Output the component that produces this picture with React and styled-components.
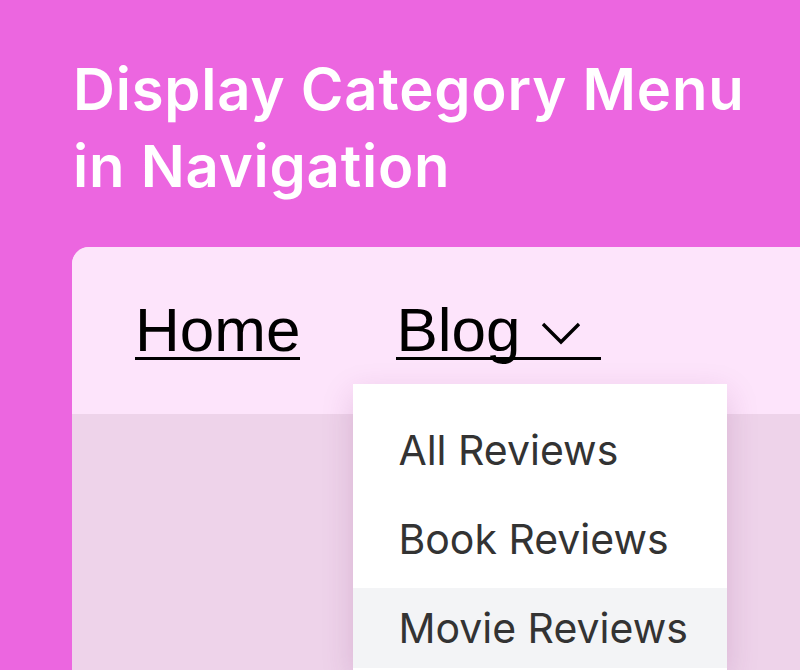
import styled, { createGlobalStyle } from "styled-components";

const GlobalStyle = createGlobalStyle`
  html, body {
    margin: 0;
    padding: 0;
  }
  body {
    font-family: Inter, "Noto Sans", sans-serif;
  }
`;

const Page = styled.div`
  width: 800px;
  height: 670px;
  overflow: hidden;
  background: #ec66e0;
  padding: 51px 0 0 72px;
  box-sizing: border-box;
`;

const Title = styled.h1`
  margin: 0 0 42px 1px;
  color: #fff;
  font-size: 58px;
  font-weight: 600;
  line-height: 77px;
  letter-spacing: 0.8px;
`;

const Card = styled.div`
  border-top-left-radius: 17px;
  background: #eed3ea;
  height: 430px;
`;

const NavBar = styled.nav`
  height: 167px;
  box-sizing: border-box;
  background: #fde4fb;
  border-top-left-radius: 17px;
  display: flex;
  align-items: flex-start;
  gap: 96px;
  padding: 56px 0 0 63px;
`;

const NavItem = styled.div`
  position: relative;
`;

const NavLink = styled.a`
  display: inline-flex;
  align-items: center;
  color: #000;
  font-family: "Liberation Sans", Arial, sans-serif;
  font-size: 62px;
  font-weight: 400;
  line-height: 54px;
  border-bottom: 3px solid #000;
  cursor: pointer;
`;

const Chevron = styled.svg`
  margin: 6px 20px 0 21px;
`;

const Dropdown = styled.ul`
  position: absolute;
  top: 81px;
  left: -43px;
  width: 374px;
  margin: 0;
  padding: 26px 0 2px;
  list-style: none;
  background: #fff;
  box-shadow: 0 10px 30px rgba(120, 40, 110, 0.18);
  display: flex;
  flex-direction: column;
  gap: 9px;
  z-index: 2;
`;

const MenuItem = styled.li`
  height: 80px;
  display: flex;
  align-items: center;
  padding-left: 45px;
  font-size: 41px;
  color: #333;
  background: ${(p) => (p.$active ? "#f3f4f6" : "transparent")};
`;

const items = ["All Reviews", "Book Reviews", "Movie Reviews"];

export default function App() {
  return (
    <>
      <GlobalStyle />
      <Page>
        <Title>
          Display Category Menu
          <br />
          in Navigation
        </Title>
        <Card>
          <NavBar>
            <NavItem>
              <NavLink>Home</NavLink>
            </NavItem>
            <NavItem>
              <NavLink>
                Blog
                <Chevron width="40" height="24" viewBox="0 0 40 24" fill="none">
                  <path d="M2 3 L20 21 L38 3" stroke="#000" strokeWidth="3.4" />
                </Chevron>
              </NavLink>
              <Dropdown>
                {items.map((label, i) => (
                  <MenuItem key={label} $active={i === items.length - 1}>
                    {label}
                  </MenuItem>
                ))}
              </Dropdown>
            </NavItem>
          </NavBar>
        </Card>
      </Page>
    </>
  );
}
